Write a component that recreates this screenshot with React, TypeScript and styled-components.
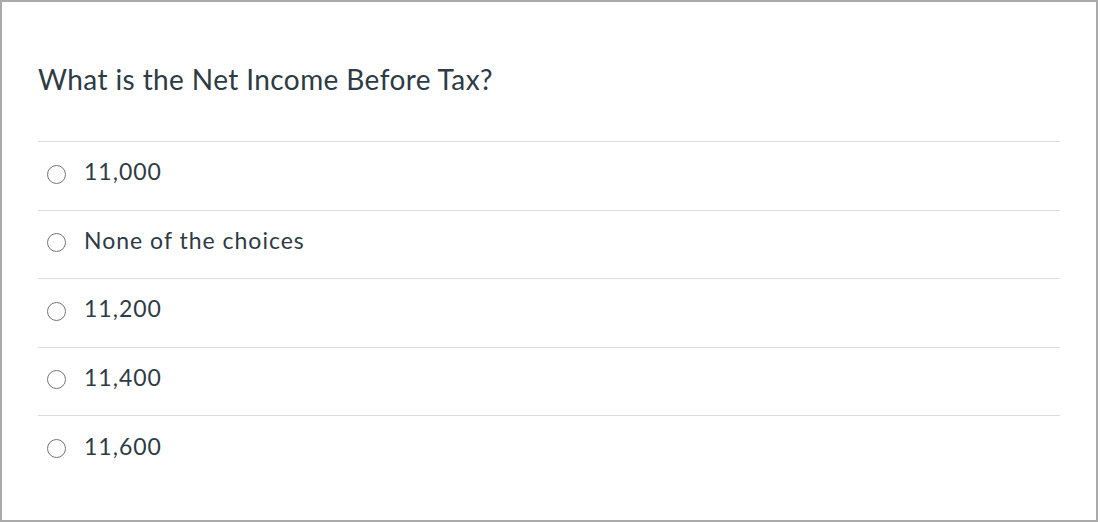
import React from "react";
import styled, { createGlobalStyle } from "styled-components";

const Global = createGlobalStyle`
  html, body { margin: 0; padding: 0; background: #fff; }
  body { font-family: Lato, "Noto Sans", sans-serif; color: #2d3b45; }
`;

const Card = styled.div`
  box-sizing: border-box;
  width: 1098px;
  height: 522px;
  border: 2px solid #aaaaaa;
  padding: 58px 36px 0 36px;
`;

const Question = styled.div`
  font-size: 28px;
  letter-spacing: 0.4px;
  line-height: 38px;
  color: #2d3b45;
  padding-bottom: 43px;
  border-bottom: 1px solid #dcdcdc;
`;

const List = styled.div`
  display: flex;
  flex-direction: column;
`;

const Row = styled.label<{ $last?: boolean }>`
  box-sizing: border-box;
  display: flex;
  align-items: center;
  gap: 18px;
  height: 68.5px;
  padding-left: 9px;
  padding-bottom: 9px;
  border-bottom: ${(p) => (p.$last ? "none" : "1px solid #dcdcdc")};
  font-size: 23px;
  letter-spacing: 1px;
  color: #2d3b45;
`;

const Radio = styled.span`
  box-sizing: border-box;
  width: 19px;
  height: 19px;
  margin-top: 6px;
  border-radius: 50%;
  border: 1.5px solid #757575;
  flex: none;
`;

const options = ["11,000", "None of the choices", "11,200", "11,400", "11,600"];

export default function App() {
  return (
    <>
      <Global />
      <Card>
        <Question>What is the Net Income Before Tax?</Question>
        <List>
          {options.map((o, i) => (
            <Row key={o} $last={i === options.length - 1}>
              <Radio />
              <span>{o}</span>
            </Row>
          ))}
        </List>
      </Card>
    </>
  );
}
